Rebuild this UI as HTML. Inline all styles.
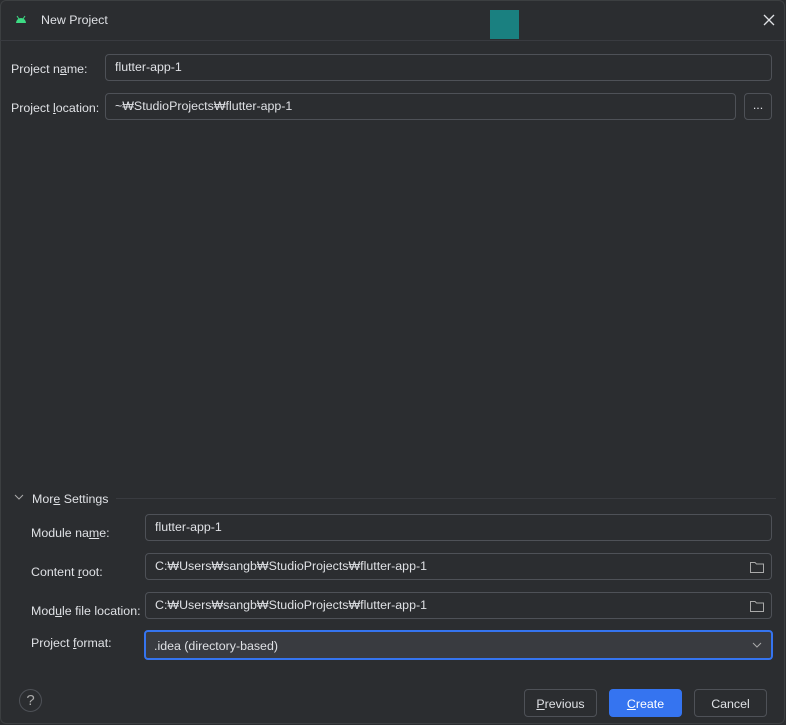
<!DOCTYPE html><html><head><style>
body{margin:0;width:786px;height:725px;background:#2b2d30;font-family:"Liberation Sans",sans-serif;font-size:12.4px;color:#dfe1e5;position:relative;overflow:hidden}
.a{position:absolute}
.f{position:absolute;border:1px solid #4e5157;border-radius:4px;box-sizing:border-box;padding-left:9px;line-height:25px;background:#2b2d30}
.l{position:absolute}
u{text-decoration:underline}
.btn{position:absolute;top:689px;height:28px;border:1px solid #4e5157;border-radius:4px;box-sizing:border-box;text-align:center;line-height:29px}
</style></head><body>
<div class="a" style="left:0;top:0;width:785px;height:724px;border:1px solid #3c3f41;border-radius:6px;box-sizing:border-box"></div>
<svg class="a" style="left:15px;top:15px" width="12" height="9"><path d="M1 8 A5 5 0 0 1 11 8 Z" fill="#3ddc84"/><line x1="2" y1="1" x2="4" y2="4" stroke="#3ddc84"/><line x1="10" y1="1" x2="8" y2="4" stroke="#3ddc84"/></svg>
<div class="a" style="left:41px;top:13px">New Project</div>
<div class="a" style="left:490px;top:10px;width:29px;height:29px;background:#1a8080"></div>
<svg class="a" style="left:763px;top:14px" width="12" height="12"><path d="M1 1L11 11M11 1L1 11" stroke="#dfe1e5" stroke-width="1.3"/></svg>
<div class="a" style="left:0;top:40px;width:786px;height:1px;background:#393b40"></div>
<div class="l" style="left:11px;top:62px">Project n<u>a</u>me:</div>
<div class="f" style="left:105px;top:54px;width:667px;height:27px">flutter-app-1</div>
<div class="l" style="left:11px;top:101px">Project <u>l</u>ocation:</div>
<div class="f" style="left:105px;top:93px;width:631px;height:27px">~₩StudioProjects₩flutter-app-1</div>
<div class="f" style="left:744px;top:93px;width:28px;height:27px;padding:0;text-align:center;line-height:22px">...</div>
<svg class="a" style="left:14px;top:493px" width="10" height="8"><path d="M1 2L5 6L9 2" fill="none" stroke="#aaa" stroke-width="1"/></svg>
<div class="l" style="left:32px;top:492px">Mor<u>e</u> Settings</div>
<div class="a" style="left:116px;top:498px;width:660px;height:1px;background:#393b40"></div>
<div class="l" style="left:31px;top:526px">Module na<u>m</u>e:</div>
<div class="f" style="left:145px;top:514px;width:627px;height:27px">flutter-app-1</div>
<div class="l" style="left:31px;top:565px">Content <u>r</u>oot:</div>
<div class="f" style="left:145px;top:553px;width:627px;height:27px">C:₩Users₩sangb₩StudioProjects₩flutter-app-1</div>
<div class="l" style="left:31px;top:604px">Mod<u>u</u>le file location:</div>
<div class="f" style="left:145px;top:592px;width:627px;height:27px">C:₩Users₩sangb₩StudioProjects₩flutter-app-1</div>
<svg class="a" style="left:750px;top:561px" width="14" height="12"><path d="M0.5 1.5H5L6.5 3H13.5V11.5H0.5Z" fill="none" stroke="#aaa"/></svg>
<svg class="a" style="left:750px;top:600px" width="14" height="12"><path d="M0.5 1.5H5L6.5 3H13.5V11.5H0.5Z" fill="none" stroke="#aaa"/></svg>
<div class="l" style="left:31px;top:636px">Project <u>f</u>ormat:</div>
<div class="f" style="left:144px;top:630px;width:629px;height:30px;border:2px solid #3574f0;background:#393b40;padding-left:8px;line-height:29px">.idea (directory-based)</div>
<svg class="a" style="left:752px;top:642px" width="10" height="7"><path d="M1 1L5 5L9 1" fill="none" stroke="#aaa"/></svg>
<div class="a" style="left:19px;top:689px;width:21px;height:21px;border:1px solid #4e5157;border-radius:50%;text-align:center;line-height:21px;color:#aaa;font-size:15px">?</div>
<div class="btn" style="left:524px;width:73px"><u>P</u>revious</div>
<div class="btn" style="left:609px;width:73px;background:#3574f0;border-color:#3574f0;color:#fff"><u>C</u>reate</div>
<div class="btn" style="left:694px;width:73px">Cancel</div>
</body></html>
